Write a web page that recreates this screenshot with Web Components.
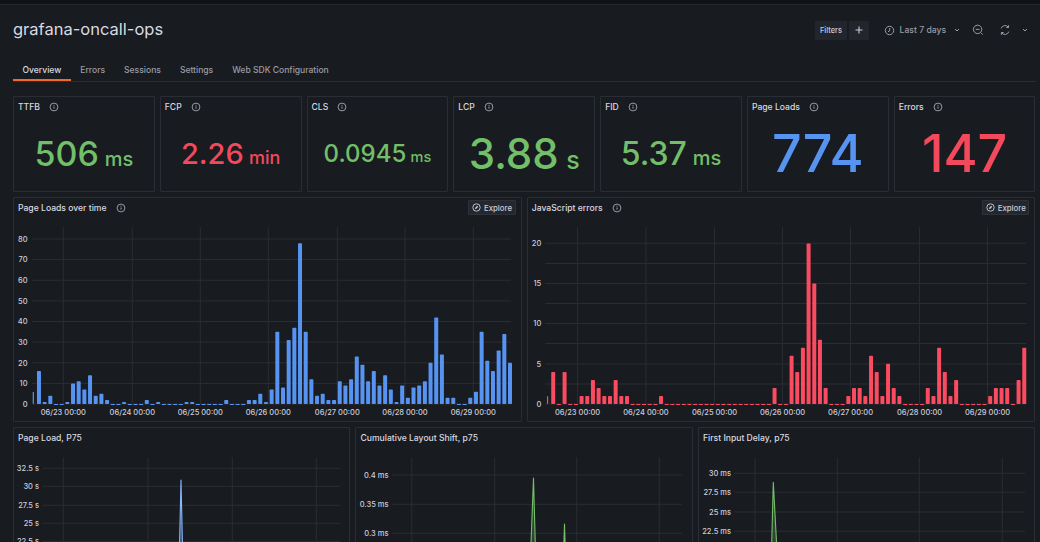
<!DOCTYPE html>
<html>
<head>
<meta charset="utf-8">
<title>grafana-oncall-ops</title>
<style>
  html, body { margin: 0; height: 542px; overflow: hidden; background: #181b1f; }
  body { font-family: Inter, "Liberation Sans", sans-serif; color: #ccccdc; }
  .rows { display: grid; grid-template-columns: repeat(42, 1fr); grid-template-rows: 96px 225px 200px; gap: 5px; padding: 0 4.5px 0 13px; margin-top: 14px; }
  .rows stat-panel { grid-column: span 6; }
  .rows .half { grid-column: span 21; }
  .rows .third { grid-column: span 14; }
</style>
</head>
<body>
<top-strip></top-strip>
<page-header heading="grafana-oncall-ops"></page-header>
<tab-bar></tab-bar>
<div class="rows">
  <stat-panel label="TTFB" value="506" unit="ms" size="34" unit-size="20" color="#73bf69"></stat-panel>
  <stat-panel label="FCP" value="2.26" unit="min" size="29" unit-size="18" color="#f2495c"></stat-panel>
  <stat-panel label="CLS" value="0.0945" unit="ms" size="24" unit-size="14.5" color="#73bf69"></stat-panel>
  <stat-panel label="LCP" value="3.88" unit="s" size="42" unit-size="25" color="#73bf69"></stat-panel>
  <stat-panel label="FID" value="5.37" unit="ms" size="32" unit-size="20" color="#73bf69"></stat-panel>
  <stat-panel label="Page Loads" value="774" unit="" size="52" unit-size="20" color="#5794f2"></stat-panel>
  <stat-panel label="Errors" value="147" unit="" size="52" unit-size="20" color="#f2495c"></stat-panel>
  <chart-panel class="half" label="Page Loads over time" chart="pageLoads" info explore></chart-panel>
  <chart-panel class="half" label="JavaScript errors" chart="jsErrors" info explore></chart-panel>
  <chart-panel class="third" label="Page Load, P75" chart="pageLoadP75"></chart-panel>
  <chart-panel class="third" label="Cumulative Layout Shift, p75" chart="clsP75"></chart-panel>
  <chart-panel class="third" label="First Input Delay, p75" chart="fidP75"></chart-panel>
</div>

<script>
const ICONS = {
  info: '<svg width="10" height="10" viewBox="0 0 10 10" fill="none" stroke="currentColor"><circle cx="5" cy="5" r="3.9" stroke-width=".9"/><path d="M5 4.6v2" stroke-width="1"/><circle cx="5" cy="3.3" r=".55" fill="currentColor" stroke="none"/></svg>',
  clock: '<svg width="11" height="11" viewBox="0 0 11 11" fill="none" stroke="currentColor" stroke-width="1"><circle cx="5.5" cy="5.5" r="4.2"/><path d="M5.7 3v2.8L4 6.8"/></svg>',
  zoomOut: '<svg width="12" height="12" viewBox="0 0 12 12" fill="none" stroke="currentColor" stroke-width="1"><circle cx="5.6" cy="5.4" r="4.2"/><path d="M3.7 5.4h3.8M8.7 8.6l2 2"/></svg>',
  sync: '<svg width="12" height="12" viewBox="0 0 12 12" fill="none" stroke="currentColor" stroke-width="1"><path d="M2.1 4.4A4.2 4.2 0 0 1 9.4 3.2M9.9 7.6A4.2 4.2 0 0 1 2.6 8.8"/><path d="M9.6 1.2v2.3H7.3M2.4 10.8V8.5h2.3"/></svg>',
  chevron: '<svg width="8" height="8" viewBox="0 0 8 8" fill="none" stroke="currentColor" stroke-width="1"><path d="M2 3l2 2 2-2"/></svg>',
  plus: '<svg width="10" height="10" viewBox="0 0 10 10" fill="none" stroke="currentColor" stroke-width="1.1"><path d="M5 1.5v7M1.5 5h7"/></svg>',
  compass: '<svg width="9" height="9" viewBox="0 0 9 9" fill="none" stroke="currentColor" stroke-width=".9"><circle cx="4.5" cy="4.5" r="3.7"/><path d="M6.2 2.8L5.2 5.2 2.8 6.2l1-2.4z" fill="currentColor" stroke="none"/></svg>'
};

// chart geometry uses page pixels, the svg viewBox maps them into the panel
const CHARTS = {
  pageLoads: {
    view: [14, 217, 506.75, 204], color: '#5794f2', left: 32, right: 511, top: 227, base: 404,
    labelX: 27.5, tickY: 415,
    rows: [['0', 404], ['10', 383.4], ['20', 362.8], ['30', 342.1], ['40', 321.5], ['50', 300.9], ['60', 280.3], ['70', 259.6], ['80', 239]],
    cols: [63.3, 132.3, 200.3, 268.3, 337.3, 405, 473.3],
    ticks: ['06/23 00:00', '06/24 00:00', '06/25 00:00', '06/26 00:00', '06/27 00:00', '06/28 00:00', '06/29 00:00'],
    bars: { x0: 33.3, step: 5.675, unit: 2.0625, values: [6, 16, 1, 4, 0, 0, 1, 10, 11, 7, 14, 4, 5, 2, 0, 0, 1, 0, 0, 0, 2, 0, 1, 0, 0, 0, 0, 1, 1, 0, 0, 0, 0, 0, 2, 0, 0, 0, 2, 2, 5, 1, 7, 35, 8, 31, 37, 78, 35, 12, 4, 5, 2, 2, 11, 9, 12, 23, 19, 11, 16, 9, 14, 7, 1, 9, 3, 8, 9, 11, 20, 42, 24, 3, 3, 0, 0, 3, 6, 35, 21, 16, 26, 34, 20] }
  },
  jsErrors: {
    view: [527.75, 217, 506.75, 204], color: '#fa4b60', left: 545, right: 1026, top: 227, base: 404,
    labelX: 541, tickY: 415,
    rows: [['0', 404], ['', 384], ['5', 364], ['', 343.5], ['10', 323.5], ['', 303.5], ['15', 283.5], ['', 263.5], ['20', 243.3]],
    cols: [577.3, 645.7, 714.3, 782.3, 850.3, 919.3, 987.3],
    ticks: ['06/23 00:00', '06/24 00:00', '06/25 00:00', '06/26 00:00', '06/27 00:00', '06/28 00:00', '06/29 00:00'],
    bars: { x0: 547.3, step: 5.675, unit: 8.03, values: [1, 4, 0, 4, 0, 0, 1, 1, 3, 2, 1, 1, 3, 1, 1, 0, 0, 0, 0, 0, 1, 0, 0, 0, 0, 0, 0, 0, 0, 0, 0, 0, 0, 0, 0, 0, 0, 0, 0, 0, 2, 0, 0, 6, 4, 7, 20, 15, 8, 2, 0, 0, 0, 1, 2, 2, 1, 6, 4, 1, 5, 2, 1, 0, 0, 0, 0, 2, 1, 7, 4, 1, 3, 0, 0, 0, 0, 0, 1, 2, 2, 2, 0, 3, 7] }
  },
  pageLoadP75: {
    view: [14, 447, 335.5, 179], color: '#8ab8ff', left: 42.7, right: 340, top: 457.3, base: 560,
    labelX: 39, rows: [['32.5 s', 468.3], ['30 s', 486.3], ['27.5 s', 505.3], ['25 s', 523.3], ['22.5 s', 541.5]],
    cols: [63.3, 148, 232.3, 316.3],
    lines: [[[179, 570], [181, 480], [183, 570]]]
  },
  clsP75: {
    view: [356.5, 447, 335.5, 179], color: '#73bf69', left: 393, right: 682.7, top: 457.3, base: 560,
    labelX: 389, rows: [['0.4 ms', 475], ['0.35 ms', 504.3], ['0.3 ms', 533.3]],
    cols: [412.3, 495.3, 577.3, 659.7],
    lines: [[[530.5, 570], [534, 478], [536.5, 570]], [[563.5, 570], [565, 524], [566.5, 570]]]
  },
  fidP75: {
    view: [699, 447, 335.5, 179], color: '#73bf69', left: 734.3, right: 1025, top: 457.3, base: 560,
    labelX: 731, rows: [['30 ms', 473.3], ['27.5 ms', 492.3], ['25 ms', 512], ['22.5 ms', 531.3]],
    cols: [755, 837.3, 919.3, 1002.3],
    lines: [[[771, 570], [773.3, 482.3], [778, 570]]]
  }
};

class TopStrip extends HTMLElement {
  constructor() {
    super();
    this.attachShadow({ mode: 'open' });
    this.shadowRoot.innerHTML = `
      <style>:host { display: block; height: 4px; background: #111217; border-bottom: 1px solid #24272c; }</style>`;
  }
}

class PageHeader extends HTMLElement {
  constructor() {
    super();
    this.attachShadow({ mode: 'open' });
  }

  connectedCallback() {
    this.shadowRoot.innerHTML = `
      <style>
        :host { display: flex; align-items: center; height: 40px; padding: 0 8px 0 13px; margin-top: 5px; box-sizing: border-box; }
        h1 { margin: 0; padding-bottom: 2px; font: 400 16.5px Inter, sans-serif; color: #d8d9e2; flex: 1; }
        .btn { height: 19px; display: flex; align-items: center; justify-content: center; background: #22252b; border-radius: 1px; color: #ccccdc; font: 500 7.5px Inter, sans-serif; }
        .filters { width: 32px; }
        .add { width: 20px; margin-left: 2px; margin-right: 14.5px; }
        .time { display: flex; align-items: center; color: #9a9ba6; font: 500 8.65px Inter, sans-serif; width: 148.5px; }
        .time svg { display: block; }
        .clock { margin-right: 5px; }
        .c1 { margin-left: 6.5px; }
        .zoom { margin-left: 11px; }
        .sync { margin-left: 15px; }
        .c2 { margin-left: 10px; }
      </style>
      <h1>${this.getAttribute('heading')}</h1>
      <div class="btn filters">Filters</div>
      <div class="btn add">${ICONS.plus}</div>
      <div class="time">
        <span class="clock">${ICONS.clock}</span>
        <span>Last 7 days</span>
        <span class="c1">${ICONS.chevron}</span>
        <span class="zoom">${ICONS.zoomOut}</span>
        <span class="sync">${ICONS.sync}</span>
        <span class="c2">${ICONS.chevron}</span>
      </div>`;
  }
}

class TabBar extends HTMLElement {
  constructor() {
    super();
    this.attachShadow({ mode: 'open' });
    const names = ['Overview', 'Errors', 'Sessions', 'Settings', 'Web SDK Configuration'];
    this.shadowRoot.innerHTML = `
      <style>
        :host { display: flex; height: 24px; margin: 7px 4.5px 0 13px; border-bottom: 1px solid #2b2e34; font: 500 8.55px Inter, sans-serif; color: #9a9ba6; }
        .tab { padding: 4px 9.5px 2px; display: flex; align-items: center; height: 24px; box-sizing: border-box; }
        .active { color: #d8d9e2; border-bottom: 2px solid #f46a2c; padding-bottom: 0; }
      </style>
      ${names.map((n, i) => `<div class="tab ${i === 0 ? 'active' : ''}">${n}</div>`).join('')}`;
  }
}

class StatPanel extends HTMLElement {
  constructor() {
    super();
    this.attachShadow({ mode: 'open' });
  }

  connectedCallback() {
    const a = n => this.getAttribute(n);
    const unit = a('unit') ? `<span class="unit" style="font-size:${a('unit-size')}px">${a('unit')}</span>` : '';
    this.shadowRoot.innerHTML = `
      <style>
        :host { display: flex; flex-direction: column; box-sizing: border-box; min-width: 0; background: #181b1f; border: 1px solid #2a2d33; border-radius: 1px; }
        .head { display: flex; align-items: center; height: 19px; flex: none; padding: 0 4px; font: 500 8.6px Inter, sans-serif; color: #d8d9e2; }
        .head svg { display: block; margin-left: 9px; color: #a5a6b0; }
        .val { flex: 1; display: flex; align-items: center; justify-content: center; font-family: Inter, sans-serif; font-weight: 500; }
        .num { display: block; line-height: 1; white-space: pre; }
        .unit { margin-left: .3em; }
      </style>
      <div class="head">${a('label')}${ICONS.info}</div>
      <div class="val" style="color:${a('color')};font-size:${a('size')}px"><span class="num">${a('value')}${unit}</span></div>`;
  }
}

class ChartPanel extends HTMLElement {
  constructor() {
    super();
    this.attachShadow({ mode: 'open' });
  }

  connectedCallback() {
    const cfg = CHARTS[this.getAttribute('chart')];
    const [vx, vy, vw, vh] = cfg.view;
    this.shadowRoot.innerHTML = `
      <style>
        :host { display: flex; flex-direction: column; box-sizing: border-box; min-width: 0; background: #181b1f; border: 1px solid #2a2d33; border-radius: 1px; overflow: hidden; }
        .head { display: flex; align-items: center; height: 19px; flex: none; padding: 0 4px; box-sizing: border-box; font: 500 8.6px Inter, sans-serif; color: #d8d9e2; }
        .head svg { display: block; margin-left: 9px; color: #a5a6b0; }
        .explore { margin-left: auto; height: 15px; width: 47.5px; box-sizing: border-box; display: flex; align-items: center; justify-content: center; gap: 3px; background: #24272d; border: 1px solid #2e3138; border-radius: 1px; font-size: 7.8px; color: #ccccdc; margin-right: 1px; }
        .explore svg { margin: 0; color: #ccccdc; }
        svg.plot { display: block; flex: none; }
        text { font: 500 7.5px Inter, sans-serif; fill: #ccccdc; }
      </style>
      <div class="head">
        ${this.getAttribute('label')}
        ${this.hasAttribute('info') ? ICONS.info : ''}
        ${this.hasAttribute('explore') ? `<div class="explore">${ICONS.compass}Explore</div>` : ''}
      </div>
      <svg class="plot" width="${vw}" height="${vh}" viewBox="${vx} ${vy} ${vw} ${vh}">${this.plot(cfg)}</svg>`;
  }

  plot(cfg) {
    const grid = '#2a2d32';
    let out = '';
    cfg.rows.forEach(([label, y]) => {
      out += `<line x1="${cfg.left}" x2="${cfg.right}" y1="${y}" y2="${y}" stroke="${grid}"/>`;
      if (label) out += `<text x="${cfg.labelX}" y="${y + 2.8}" text-anchor="end">${label}</text>`;
    });
    cfg.cols.forEach((x, i) => {
      out += `<line x1="${x}" x2="${x}" y1="${cfg.top}" y2="${cfg.base}" stroke="${grid}"/>`;
      if (cfg.ticks) out += `<text x="${x}" y="${cfg.tickY}" text-anchor="middle">${cfg.ticks[i]}</text>`;
    });
    if (cfg.bars) {
      const { x0, step, unit, values } = cfg.bars;
      values.forEach((v, i) => {
        const cx = x0 + i * step;
        const w = i === 0 ? 1.2 : 4;
        // empty buckets still get a small dash on the baseline
        const h = v === 0 ? 1 : v * unit;
        const y = v === 0 ? cfg.base : cfg.base - h;
        out += `<rect x="${cx - w / 2}" y="${y}" width="${w}" height="${h}" rx="${v === 0 ? 0 : .8}" fill="${cfg.color}"/>`;
      });
    }
    (cfg.lines || []).forEach(pts => {
      const p = pts.map(q => q.join(',')).join(' ');
      out += `<polygon points="${p}" fill="${cfg.color}" fill-opacity=".25"/>`;
      out += `<polyline points="${p}" fill="none" stroke="${cfg.color}" stroke-width="1.1" stroke-linejoin="round"/>`;
    });
    return out;
  }
}

customElements.define('top-strip', TopStrip);
customElements.define('page-header', PageHeader);
customElements.define('tab-bar', TabBar);
customElements.define('stat-panel', StatPanel);
customElements.define('chart-panel', ChartPanel);
</script>
</body>
</html>
